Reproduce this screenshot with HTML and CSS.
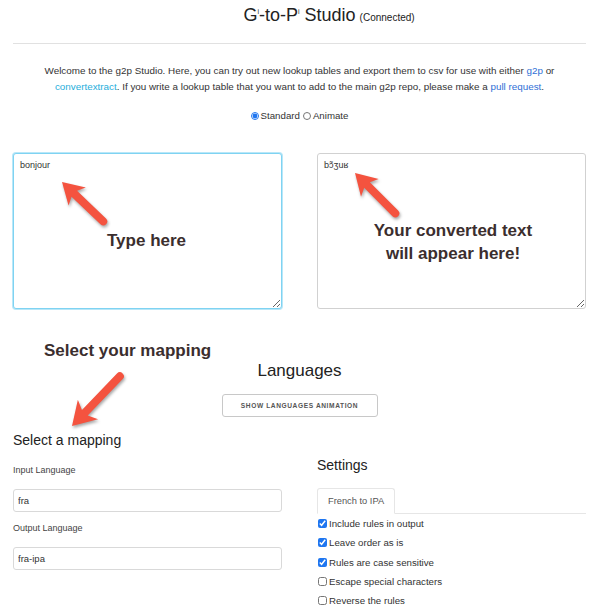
FILE: index.html
```html
<!DOCTYPE html>
<html lang="en">
  <head>
    <meta charset="UTF-8" />
    <meta name="viewport" content="width=device-width, initial-scale=1.0" />
    <title>G2P Studio</title>
    <link rel="stylesheet" href="styles.css">
  </head>
  <body>
    <div class="page">
      <!-- 标题 -->
      <header class="top">
        <span></span>
        <h1 class="title">G<sup>i</sup>-to-P<sup>i</sup> Studio</h1>
        <span class="status">(Connected)</span>
      </header>
      <hr class="rule" />

      <p class="intro">
        Welcome to the g2p Studio. Here, you can try out new lookup tables and export them to csv for use with either
        <a class="link" href="#">g2p</a> or<br />
        <a class="link link-light" href="#">convertextract</a>. If you write a lookup table that you want to add to the main g2p repo, please make a
        <a class="link" href="#">pull request</a>.
      </p>

      <div class="mode">
        <label><input type="radio" name="mode" checked /> Standard</label>
        <label><input type="radio" name="mode" /> Animate</label>
      </div>

      <!-- 输入 / 输出 -->
      <div class="io">
        <textarea class="box box-focus">bonjour</textarea>
        <textarea class="box">bɔ̃ʒuʁ</textarea>
      </div>

      <section class="languages">
        <h2 class="languages-title">Languages</h2>
        <button class="btn">Show languages animation</button>
      </section>

      <div class="mapping">
        <div class="col">
          <h3 class="col-title">Select a mapping</h3>
          <label class="field-label">Input Language</label>
          <input class="field" value="fra" />
          <label class="field-label">Output Language</label>
          <input class="field" value="fra-ipa" />
        </div>
        <div class="col col-settings">
          <h3 class="col-title">Settings</h3>
          <div class="tabs"><span class="tab">French to IPA</span></div>
          <ul class="checks">
            <li><label><input type="checkbox" checked /> Include rules in output</label></li>
            <li><label><input type="checkbox" checked /> Leave order as is</label></li>
            <li><label><input type="checkbox" checked /> Rules are case sensitive</label></li>
            <li><label><input type="checkbox" /> Escape special characters</label></li>
            <li><label><input type="checkbox" /> Reverse the rules</label></li>
          </ul>
        </div>
      </div>
    </div>

    <!-- 标注 (箭头和说明文字) -->
    <div class="notes">
      <svg class="arrows" width="600" height="611" viewBox="0 0 600 611">
        <g transform="translate(62 182) rotate(43.7)">
          <path d="M0 0 L21 -12.5 L17 -4 L57 -4 A4 4 0 0 1 57 4 L17 4 L21 12.5 Z" />
        </g>
        <g transform="translate(355 173) rotate(45)">
          <path d="M0 0 L21 -12.5 L17 -4 L57 -4 A4 4 0 0 1 57 4 L17 4 L21 12.5 Z" />
        </g>
        <g transform="translate(72 426) rotate(-46.1)">
          <path d="M0 0 L23 -14 L18.5 -4 L69 -4 A4 4 0 0 1 69 4 L18.5 4 L23 14 Z" />
        </g>
      </svg>
      <div class="note note-type">Type here</div>
      <div class="note note-output">Your converted text<br />will appear here!</div>
      <div class="note note-mapping">Select your mapping</div>
    </div>
  </body>
</html>
```

FILE: styles.css
```css
* {
  margin: 0;
  padding: 0;
  box-sizing: border-box;
}

html {
  overflow: hidden;
}

body {
  position: relative;
  width: 600px;
  height: 611px;
  font-family: "Liberation Sans", Arial, sans-serif;
  color: #222;
  background: #fff;
}

.page {
  padding: 0 14px 0 13px;
}

/* 标题 */
.top {
  display: grid;
  grid-template-columns: 1fr auto 1fr;
  align-items: baseline;
  padding-top: 1px;
}

.title {
  font-size: 18px;
  line-height: 22px;
  font-weight: normal;
  color: #222;
}

.title sup {
  font-size: 7px;
  vertical-align: 7px;
}

.status {
  font-size: 10px;
  margin-left: 4px;
  color: #222;
}

.rule {
  border: 0;
  border-top: 1px solid #e1e1e1;
  margin-top: 17px;
}

.intro {
  margin-top: 19px;
  font-size: 9.85px;
  line-height: 16px;
  text-align: center;
  color: #333;
}

.link {
  color: #2f6fd6;
  text-decoration: none;
}

.link-light {
  color: #1eaedb;
}

.mode {
  margin-top: 13px;
  display: flex;
  justify-content: center;
  gap: 3px;
  font-size: 9.7px;
  line-height: 16px;
  color: #333;
}

.mode label {
  display: flex;
  align-items: center;
}

.mode input {
  width: 8px;
  height: 8px;
  margin: 0 2px 0 0;
  accent-color: #1f76f0;
}

/* 输入 / 输出 */
.io {
  margin-top: 29px;
  display: grid;
  grid-template-columns: 1fr 1fr;
  gap: 35px;
}

.box {
  display: block;
  width: 100%;
  height: 156px;
  padding: 6px;
  border: 1px solid #d1d1d1;
  border-radius: 3px;
  font-family: inherit;
  font-size: 9px;
  line-height: 11px;
  color: #333;
  outline: none;
}

.box-focus {
  border-color: #7fd3f2;
  box-shadow: 0 0 0 1px #b9e7f8;
}

/* 语言 */
.languages {
  margin-top: 51px;
  display: flex;
  flex-direction: column;
  align-items: center;
}

.languages-title {
  font-size: 17px;
  line-height: 22px;
  font-weight: normal;
  color: #222;
}

.btn {
  margin-top: 12px;
  height: 23px;
  width: 156px;
  border: 1px solid #c8c8c8;
  border-radius: 3px;
  background: #fff;
  font-family: inherit;
  font-size: 6.6px;
  font-weight: bold;
  letter-spacing: 0.6px;
  text-transform: uppercase;
  color: #555;
  cursor: pointer;
}

/* 映射 + 设置 */
.mapping {
  margin-top: 14px;
  display: grid;
  grid-template-columns: 1fr 1fr;
  gap: 35px;
}

.col-title {
  font-size: 14px;
  line-height: 18px;
  font-weight: normal;
  color: #222;
}

.field-label {
  display: block;
  font-size: 9px;
  line-height: 12px;
  color: #444;
  margin-bottom: 13px;
}

.col-title + .field-label {
  margin-top: 15px;
}

.field {
  display: block;
  width: 100%;
  height: 23px;
  padding: 0 4px;
  border: 1px solid #d9d9d9;
  border-radius: 3px;
  font-family: inherit;
  font-size: 9.5px;
  color: #333;
  margin-bottom: 10px;
}

.col-settings {
  padding-top: 25px;
}

.tabs {
  margin-top: 14px;
  display: flex;
  border-bottom: 1px solid #e6e6e6;
}

.tab {
  height: 26px;
  margin-bottom: -1px;
  padding: 0 10px;
  border: 1px solid #e6e6e6;
  border-bottom-color: #fff;
  border-radius: 3px 3px 0 0;
  background: #fff;
  font-size: 9.3px;
  line-height: 24px;
  color: #555;
}

.checks {
  list-style: none;
}

.checks li {
  height: 19.3px;
  display: flex;
  align-items: center;
}

.checks label {
  display: flex;
  align-items: center;
  font-size: 9.7px;
  color: #333;
}

.checks input {
  width: 9px;
  height: 9px;
  margin: 0 2px 0 1px;
  accent-color: #1f76f0;
}

/* 标注 */
.notes {
  position: absolute;
  top: 0;
  left: 0;
  width: 600px;
  height: 611px;
  pointer-events: none;
}

.arrows {
  position: absolute;
  top: 0;
  left: 0;
  fill: #f4533f;
  filter: drop-shadow(1px 2px 1.5px rgba(0, 0, 0, 0.35));
}

.note {
  position: absolute;
  font-size: 17px;
  line-height: 20px;
  font-weight: bold;
  color: #3b2e2e;
  white-space: nowrap;
}

.note-type {
  left: 107px;
  top: 231px;
}

.note-output {
  left: 316px;
  width: 274px;
  top: 219px;
  line-height: 23px;
  text-align: center;
}

.note-mapping {
  left: 44px;
  top: 341px;
}
```
